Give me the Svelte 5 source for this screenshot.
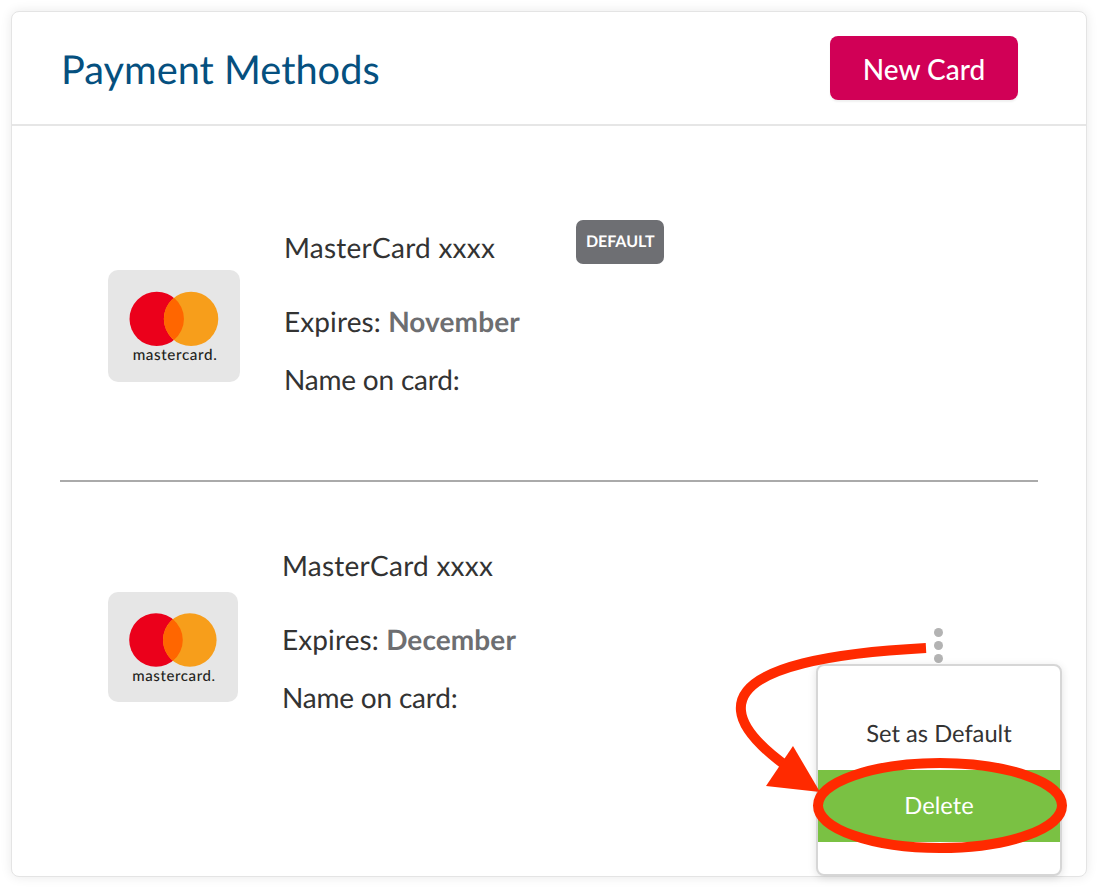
<script>
  const cards = [
    { name: "MasterCard xxxx", month: "November", isDefault: true },
    { name: "MasterCard xxxx", month: "December", isDefault: false },
  ];
</script>

<div class="page">
  <section class="panel">
    <header class="panel-head">
      <h1>Payment Methods</h1>
      <button class="new-card">New Card</button>
    </header>

    {#each cards as card, i}
      <div class="row" class:second={i === 1}>
        <div class="logo">
          <svg viewBox="0 0 130 110" aria-hidden="true">
            <circle cx="48" cy="48" r="26.8" fill="#eb001b" />
            <circle cx="81.8" cy="48" r="26.8" fill="#f79e1b" />
            <path d="M64.9 27.2a26.8 26.8 0 0 1 0 41.6a26.8 26.8 0 0 1 0-41.6z" fill="#ff6600" />
            <text x="66" y="88.5" text-anchor="middle" class="wordmark">mastercard.</text>
          </svg>
        </div>
        <div class="info">
          <div class="name-line">
            <span class="name">{card.name}</span>
            {#if card.isDefault}<span class="badge">DEFAULT</span>{/if}
          </div>
          <div class="line expires">Expires: <b>{card.month}</b></div>
          <div class="line holder">Name on card:</div>
        </div>
      </div>
    {/each}

    <div class="kebab"><i></i><i></i><i></i></div>
    <div class="menu">
      <div class="menu-item">Set as Default</div>
      <div class="menu-item active">Delete</div>
    </div>

    <!-- hand drawn annotation -->
    <svg class="markup" viewBox="0 0 1100 888" aria-hidden="true">
      <path d="M926 648C850 652 736 664 741 711C743 733 772 756 792 770" fill="none" stroke="#ff2a00" stroke-width="10" />
      <polygon points="793,746 766,786 820,792" fill="#ff2a00" />
      <ellipse cx="940" cy="805.5" rx="122" ry="42.5" fill="none" stroke="#ff2a00" stroke-width="10" />
    </svg>
  </section>
</div>

<style>
  :global(body) {
    background: #fff;
    font-family: Lato, "Open Sans", sans-serif;
    text-rendering: geometricPrecision;
  }

  .page {
    padding: 11px 13px 11px 11px;
  }

  .panel {
    position: relative;
    background: #fff;
    border: 1px solid #e4e4e4;
    border-radius: 8px;
    box-shadow: 0 0 12px rgba(0, 0, 0, 0.09);
  }

  .panel-head {
    display: flex;
    justify-content: space-between;
    align-items: center;
    height: 112px;
    padding: 0 68px 0 49px;
    border-bottom: 2px solid #e6e6e6;
  }

  h1 {
    margin: 2px 0 0;
    font-size: 39.75px;
    font-weight: 400;
    color: #05507f;
  }

  .new-card {
    width: 188px;
    height: 64px;
    padding: 2px 0 0;
    border: 0;
    border-radius: 8px;
    background: #d10056;
    box-shadow: 0 2px 2px rgba(0, 0, 0, 0.06);
    color: #fff;
    font-family: inherit;
    font-size: 28px;
    font-weight: 500;
  }

  .row {
    display: flex;
    align-items: flex-start;
    gap: 44px;
    margin: 0 48px;
    padding: 93px 0 85px 48px;
    color: #333;
    font-size: 28px;
    line-height: 32px;
  }

  .row.second {
    padding-top: 67px;
    padding-bottom: 163px;
    border-top: 2px solid #aaa;
  }

  .logo {
    width: 132px;
    height: 112px;
    margin-top: 51px;
    border-radius: 10px;
    background: #e6e6e6;
  }

  .second .logo {
    width: 130px;
    height: 110px;
    margin-top: 43px;
  }

  .logo svg {
    display: block;
    width: 100%;
    height: 100%;
  }

  .wordmark {
    font-family: Lato, sans-serif;
    font-size: 15px;
    font-weight: 500;
    letter-spacing: 0.6px;
    fill: #231f20;
  }

  .name-line {
    display: flex;
    align-items: flex-start;
    gap: 81px;
  }

  .name {
    margin-top: 12px;
    letter-spacing: 0.25px;
  }

  .second .name {
    margin-top: 0;
  }

  .badge {
    width: 88px;
    height: 44px;
    margin-top: 1px;
    border-radius: 7px;
    background: #6e6f73;
    color: #fff;
    font-size: 16px;
    font-weight: 700;
    line-height: 44px;
    text-align: center;
  }

  .expires {
    margin: 41px 0 26px;
    letter-spacing: 0.1px;
  }

  .second .expires {
    margin-top: 42px;
  }

  .holder {
    letter-spacing: -0.2px;
  }

  .expires b {
    color: #6d6e71;
    font-weight: 700;
  }

  .kebab {
    position: absolute;
    left: 921.5px;
    top: 616px;
    display: flex;
    flex-direction: column;
    gap: 4px;
  }

  .kebab i {
    width: 9px;
    height: 9px;
    border-radius: 50%;
    background: #b3b3b3;
  }

  .menu {
    position: absolute;
    left: 804px;
    top: 652px;
    box-sizing: border-box;
    width: 246px;
    height: 212px;
    padding-top: 32px;
    border: 2px solid #d6d6d6;
    border-radius: 8px;
    background: #fff;
    box-shadow: 0 2px 8px rgba(0, 0, 0, 0.12);
    text-align: center;
    color: #333;
    font-size: 23.7px;
  }

  .menu-item {
    height: 72px;
    line-height: 72px;
  }

  .menu-item.active {
    background: #7ac143;
    color: #fff;
  }

  .markup {
    position: absolute;
    left: -12px;
    top: -12px;
    width: 1100px;
    height: 888px;
    pointer-events: none;
  }
</style>
